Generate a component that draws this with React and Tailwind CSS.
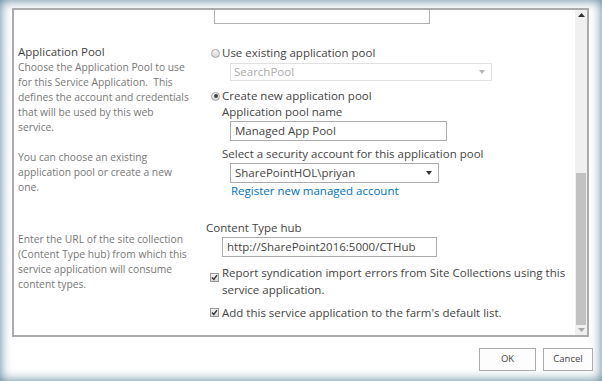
import React from 'react';

// SharePoint-style "Managed Metadata Service" dialog fragment

const Radio = ({ checked }) => (
    <span className="inline-flex items-center justify-center w-[9px] h-[9px] rounded-full border border-[#a3a3a3] bg-gradient-to-b from-[#f4f4f4] to-[#d9d9d9] shrink-0">
        {checked && <span className="w-[4px] h-[4px] rounded-full bg-[#444]" />}
    </span>
);

const Checkbox = () => (
    <span className="inline-flex items-center justify-center w-[9px] h-[9px] border border-[#9a9a9a] bg-gradient-to-b from-[#f2f2f2] to-[#d6d6d6] shrink-0">
        <svg width="7" height="7" viewBox="0 0 7 7">
            <path d="M1 3.6 L2.8 5.4 L6 1.2" fill="none" stroke="#333" strokeWidth="1.4" />
        </svg>
    </span>
);

const Arrow = ({ color = '#333' }) => (
    <svg width="6" height="4" viewBox="0 0 6 4">
        <path d="M0 0 H6 L3 4 Z" fill={color} />
    </svg>
);

export default function App() {
    return (
        <div className="w-[602px] h-[381px] bg-white shadow-[inset_0_0_12px_#4f7d93] pl-[12px] pt-[8px] pr-[13px] flex flex-col font-['Open_Sans','Noto_Sans',sans-serif] text-[#444]">
            {/* main panel */}
            <div className="h-[329px] border-2 border-[#ababab] flex overflow-hidden">
                <div className="flex-1 flex flex-col">
                    {/* clipped input from the previous section */}
                    <div className="ml-[200px] w-[216px] h-[14px] border-x border-b border-[#b0b0b0]" />

                    {/* Application Pool section */}
                    <div className="flex items-start mt-[20px]">
                        <div className="w-[192px] pl-[4px] shrink-0">
                            <div className="text-[11.5px] leading-[16px] text-[#444]">Application Pool</div>
                            <div className="text-[10.3px] leading-[15px] text-[#777] whitespace-pre">
                                {'Choose the Application Pool to use\nfor this Service Application.  This\ndefines the account and credentials\nthat will be used by this web\nservice.'}
                            </div>
                            <div className="mt-[15px] text-[10.3px] leading-[15px] text-[#777] whitespace-pre">
                                {'You can choose an existing\napplication pool or create a new\none.'}
                            </div>
                        </div>
                        <div className="flex flex-col text-[11.5px]">
                            <div className="flex items-center h-[18px] pl-[5px] gap-[2px]">
                                <Radio />
                                <span>Use existing application pool</span>
                            </div>
                            <div className="mt-[1px] ml-[24px] w-[262px] h-[18px] border border-[#e1e1e1] flex items-center justify-between pl-[3px] pr-[6px] text-[#ababab]">
                                <span>SearchPool</span>
                                <Arrow color="#b5b5b5" />
                            </div>
                            <div className="mt-[7px] flex items-center h-[16px] pl-[5px] gap-[2px]">
                                <Radio checked />
                                <span>Create new application pool</span>
                            </div>
                            <div className="pl-[16px] leading-[15px]">Application pool name</div>
                            <div className="mt-[2px] ml-[24px] w-[217px] h-[20px] border border-[#ababab] flex items-center px-[4px]">
                                Managed App Pool
                            </div>
                            <div className="mt-[5px] pl-[16px] leading-[16px]">Select a security account for this application pool</div>
                            <div className="mt-[1px] ml-[24px] w-[209px] h-[20px] border border-[#ababab] flex items-center justify-between px-[4px] pr-[6px]">
                                <span>SharePointHOL\priyan</span>
                                <Arrow />
                            </div>
                            <div className="pl-[25px] leading-[16px] text-[#0072c6]">Register new managed account</div>
                        </div>
                    </div>

                    {/* Content Type hub section */}
                    <div className="flex items-start mt-[21px]">
                        <div className="w-[192px] pl-[4px] shrink-0 mt-[12px] text-[10.3px] leading-[15px] text-[#777] whitespace-pre">
                            {'Enter the URL of the site collection\n(Content Type hub) from which this\nservice application will consume\ncontent types.'}
                        </div>
                        <div className="flex flex-col text-[11.5px]">
                            <div className="leading-[16px]">Content Type hub</div>
                            <div className="mt-[1px] ml-[16px] w-[215px] h-[20px] border border-[#ababab] flex items-center px-[4px]">
                                http://SharePoint2016:5000/CTHub
                            </div>
                            <div className="mt-[7px] flex items-start pl-[4px] gap-[3px] leading-[17px]">
                                <span className="mt-[4px]"><Checkbox /></span>
                                <span className="whitespace-pre">{'Report syndication import errors from Site Collections using this\nservice application.'}</span>
                            </div>
                            <div className="mt-[6px] flex items-center pl-[4px] gap-[3px] leading-[17px]">
                                <Checkbox />
                                <span>Add this service application to the farm's default list.</span>
                            </div>
                        </div>
                    </div>
                </div>

                {/* scrollbar */}
                <div className="w-[12px] shrink-0 bg-[#f0f0f0] flex flex-col">
                    <div className="h-[9px] flex items-center justify-center">
                        <svg width="7" height="4" viewBox="0 0 7 4"><path d="M0 4 H7 L3.5 0 Z" fill="#333" /></svg>
                    </div>
                    <div className="h-[154px]" />
                    <div className="h-[152px] mx-[1px] bg-[#c2c2c2]" />
                    <div className="flex-1 flex items-center justify-center">
                        <svg width="7" height="4" viewBox="0 0 7 4"><path d="M0 0 H7 L3.5 4 Z" fill="#a6a6a6" /></svg>
                    </div>
                </div>
            </div>

            {/* buttons */}
            <div className="flex justify-end gap-[7px] mt-[11px] -mr-[4px] text-[9.5px] text-[#444]">
                <button className="w-[57px] h-[23px] border border-[#ababab] bg-[#fdfdfd]">OK</button>
                <button className="w-[50px] h-[23px] border border-[#ababab] bg-[#fdfdfd]">Cancel</button>
            </div>
        </div>
    );
}
